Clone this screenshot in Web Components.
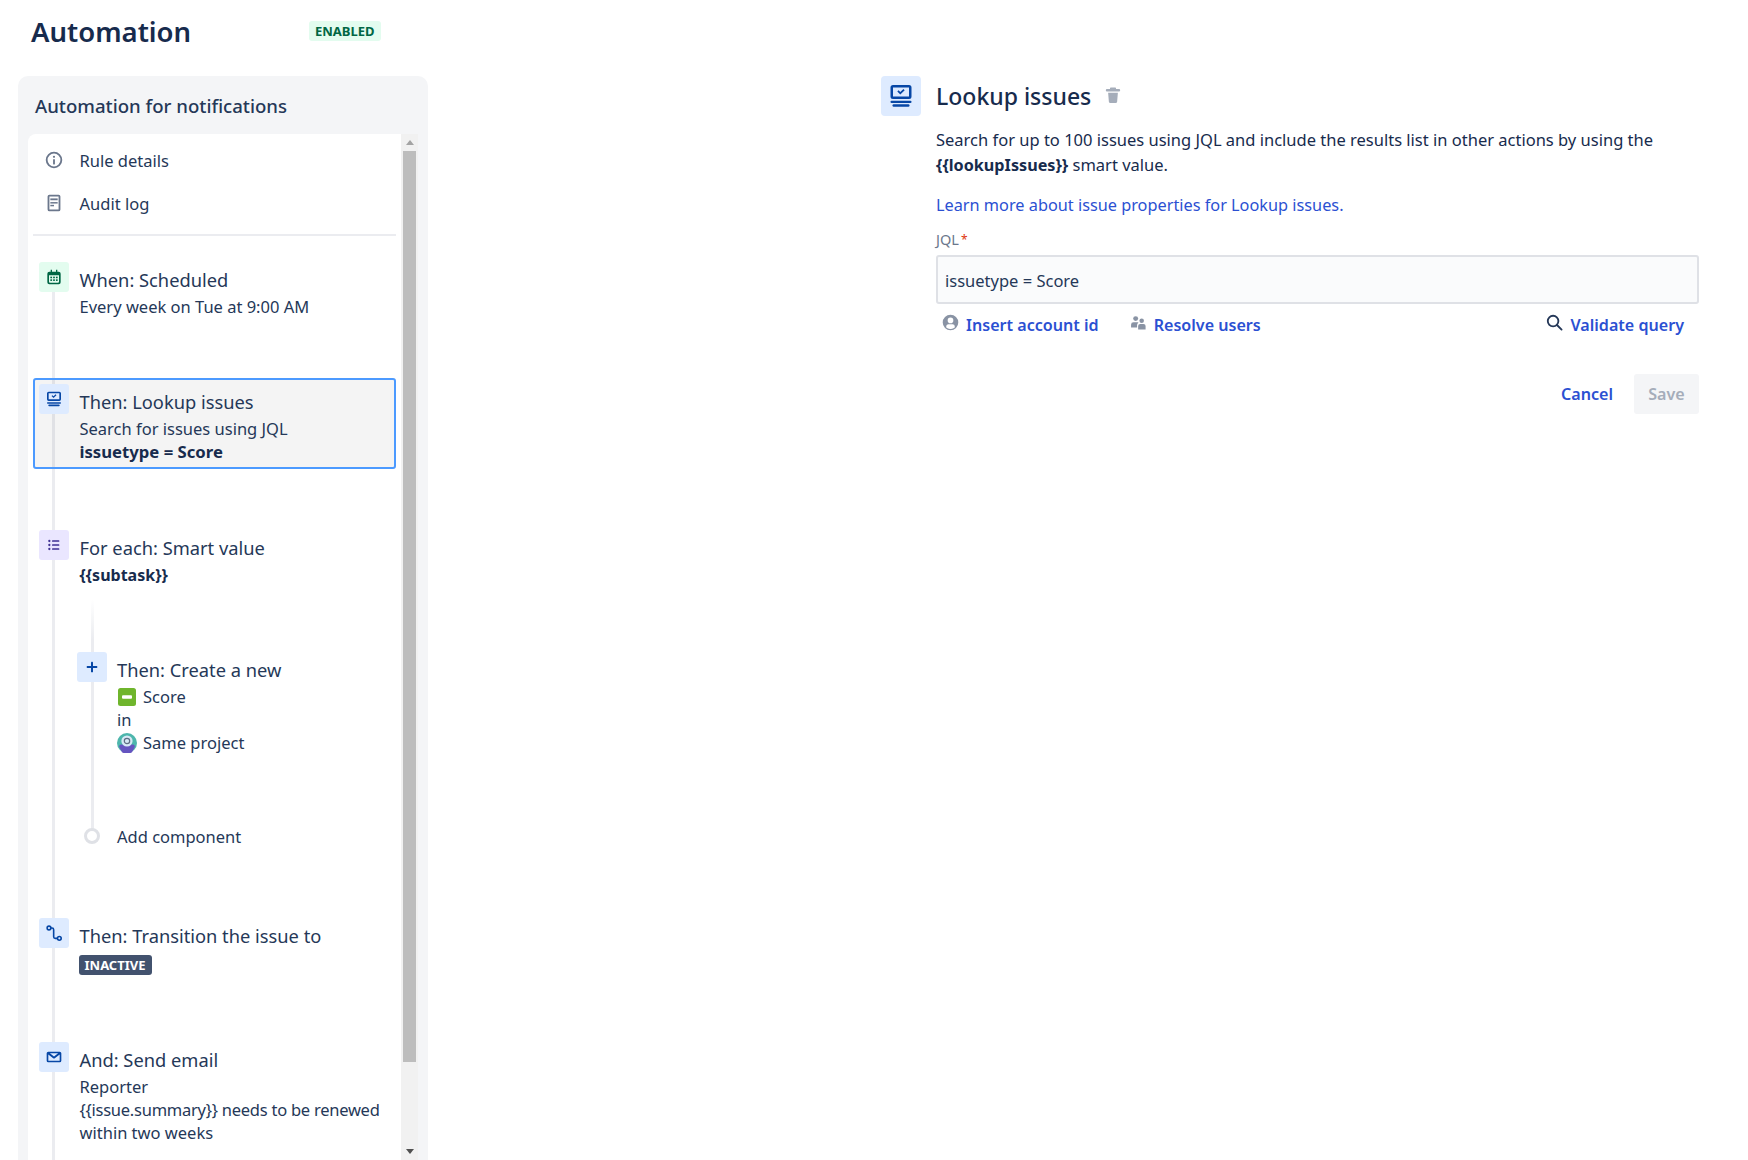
<!DOCTYPE html>
<html><head><meta charset="utf-8">
<style>
html,body{margin:0;padding:0;height:1160px;overflow:hidden;background:#fff}
body{font-family:"Noto Sans","Open Sans",sans-serif;color:#172B4D}
</style></head>
<body>
<template id="icons">
<svg data-i="info" viewBox="0 0 24 24"><path fill-rule="evenodd" d="M12 21a9 9 0 1 0 0-18 9 9 0 0 0 0 18zm0-2a7 7 0 1 1 0-14 7 7 0 0 1 0 14z"/><rect x="11" y="11" width="2" height="6" rx="1"/><circle cx="12" cy="8.5" r="1.2"/></svg>
<svg data-i="doc" viewBox="0 0 24 24"><path fill-rule="evenodd" d="M7 3h10a2 2 0 0 1 2 2v14a2 2 0 0 1-2 2H7a2 2 0 0 1-2-2V5a2 2 0 0 1 2-2zm0 2v14h10V5H7z"/><rect x="8" y="7" width="8" height="2"/><rect x="8" y="11" width="8" height="1.600"/><rect x="8" y="14" width="4" height="1.600"/></svg>
<svg data-i="cal" viewBox="0 0 24 24"><path fill-rule="evenodd" d="M7 1h2v3h6V1h2v3h2a3 3 0 0 1 3 3v13a3 3 0 0 1-3 3H5a3 3 0 0 1-3-3V7a3 3 0 0 1 3-3h2V1zM4.500 9.500V19a1.500 1.500 0 0 0 1.500 1.500h12a1.500 1.500 0 0 0 1.500-1.500V9.500h-15z"/><rect x="6.500" y="11.500" width="2.600" height="2.400"/><rect x="10.700" y="11.500" width="2.600" height="2.400"/><rect x="14.900" y="11.500" width="2.600" height="2.400"/><rect x="6.500" y="15.500" width="2.600" height="2.400"/><rect x="10.700" y="15.500" width="2.600" height="2.400"/><rect x="14.900" y="15.500" width="2.600" height="2.400"/></svg>
<svg data-i="lookup" viewBox="0 0 24 24"><path fill-rule="evenodd" d="M4 1h16a2.500 2.500 0 0 1 2.500 2.500v9a2.500 2.500 0 0 1-2.500 2.500H4a2.500 2.500 0 0 1-2.500-2.500v-9A2.500 2.500 0 0 1 4 1zm0 2.500v9h16v-9H4z"/><path d="M8.300 7.600l1.300-1.300 1.700 1.700 3.100-3.100 1.300 1.300-4.400 4.400z"/><rect x="1.500" y="16.700" width="21" height="2.300" rx="1"/><rect x="3.500" y="20.300" width="17" height="2.500" rx="1.200"/></svg>
<svg data-i="list" viewBox="0 0 24 24"><circle cx="5" cy="6" r="1.700"/><circle cx="5" cy="12" r="1.700"/><circle cx="5" cy="18" r="1.700"/><rect x="9" y="4.700" width="11" height="2.600" rx="1"/><rect x="9" y="10.700" width="11" height="2.600" rx="1"/><rect x="9" y="16.700" width="11" height="2.600" rx="1"/></svg>
<svg data-i="plus" viewBox="0 0 24 24"><rect x="10.500" y="4" width="3" height="16" rx="1"/><rect x="4" y="10.500" width="16" height="3" rx="1"/></svg>
<svg data-i="flow" viewBox="0 0 24 24" fill="none" stroke="currentColor" stroke-width="2.400"><circle cx="4.500" cy="4.500" r="2.800"/><circle cx="20" cy="20" r="2.800"/><path d="M7.300 4.500H9a2.500 2.500 0 0 1 2.500 2.500v10.500a2.500 2.500 0 0 0 2.500 2.500h3.200"/></svg>
<svg data-i="mail" viewBox="0 0 24 24"><path fill-rule="evenodd" d="M3.500 4h17A2.500 2.500 0 0 1 23 6.500v11a2.500 2.500 0 0 1-2.500 2.500h-17A2.500 2.500 0 0 1 1 17.500v-11A2.500 2.500 0 0 1 3.500 4zM3.500 8.300v9.200h17V8.300l-7.300 5.600a2 2 0 0 1-2.400 0L3.500 8.300zM5.800 6.500l6.200 4.800 6.200-4.800H5.800z"/></svg>
<svg data-i="trash" viewBox="0 0 24 24"><path d="M9 2h6a1 1 0 0 1 1 1v1h4a1.600 1.600 0 0 1 0 3.200H4A1.600 1.600 0 0 1 4 4h4V3a1 1 0 0 1 1-1z"/><path d="M5.500 9h13l-1 12a1.500 1.500 0 0 1-1.500 1.500H8A1.500 1.500 0 0 1 6.500 21z"/></svg>
<svg data-i="user" viewBox="0 0 24 24"><path fill-rule="evenodd" d="M12 1a11 11 0 1 1 0 22 11 11 0 0 1 0-22zm0 4a4 4 0 1 0 0 8 4 4 0 0 0 0-8zm-6 14.200A8.500 8.500 0 0 0 12 21a8.500 8.500 0 0 0 6-1.800V17a3 3 0 0 0-3-2.500H9A3 3 0 0 0 6 17z"/></svg>
<svg data-i="people" viewBox="0 0 24 24"><circle cx="8" cy="6.500" r="3.500"/><circle cx="16.500" cy="9.500" r="3.200"/><path d="M1.500 19v-4a3.500 3.500 0 0 1 3.500-3.500h6A3.500 3.500 0 0 1 12 12.200 4 4 0 0 0 10 16v3z"/><path d="M11.500 22v-5a3 3 0 0 1 3-3h4.500a3 3 0 0 1 3 3v5z"/></svg>
<svg data-i="search" viewBox="0 0 24 24" fill="none" stroke="currentColor" stroke-width="2.600"><circle cx="10" cy="10" r="7.500"/><path d="M15.500 15.500L22 22" stroke-linecap="round"/></svg>
<svg data-i="score" viewBox="0 0 18 18"><rect width="18" height="18" rx="2.500" fill="#6FB52C"/><rect x="4" y="7.200" width="10" height="3.600" rx="1" fill="#fff"/></svg>
<svg data-i="robot" viewBox="0 0 20 20"><circle cx="10" cy="10" r="10" fill="#4DB6AC"/><path d="M2.500 14.500a2 2 0 0 1 2-3h11a2 2 0 0 1 2 3L15 19.200a10 10 0 0 1-10 0z" fill="#6554C0"/><circle cx="10" cy="8" r="5.600" fill="#D7E9F5"/><circle cx="10" cy="8" r="2.700" fill="none" stroke="#5E6C84" stroke-width="1.200"/></svg>
</template>

<template id="t-icon">
<style>:host{display:inline-flex;align-items:center;justify-content:center;flex:none}
svg{display:block;width:100%;height:100%;fill:currentColor}svg[fill=none]{fill:none}</style>
<span id="h" style="display:contents"></span>
</template>

<template id="t-lozenge">
<style>:host{display:inline-block;font:700 13px/20px "Noto Sans",sans-serif;height:20px;padding:0 6px;border-radius:3px;box-sizing:border-box;vertical-align:top}
:host([tone=green]){background:#E3FCEF;color:#006644}
:host([tone=dark]){background:#42526E;color:#fff}</style><slot></slot>
</template>

<template id="t-step">
<style>
:host{display:block;position:relative;box-sizing:border-box;font-size:16.500px;line-height:23px;color:#253858}
.wrap{display:flex;gap:10.500px;padding:6px 0 0 6px}
:host([selected]){border:2px solid #4C9AFF;border-radius:3px;background:rgba(0,0,0,.045)}
:host([selected]) .wrap{padding:4px 0 0 4px}
:host([nested]) .wrap{gap:10px}
.badge{width:30px;height:30px;border-radius:3px;flex:none;display:flex;align-items:center;justify-content:center;position:relative;z-index:1}
.badge a-icon{width:16px;height:16px}
.t{font-size:18.300px;line-height:24px;margin-top:5.500px;color:#253858}
.body{display:block;margin-top:3.500px}
:host([tone=green]) .badge{background:#E3FCEF;color:#006644}
:host([tone=blue]) .badge{background:#DEEBFF;color:#0747A6}
:host([tone=purple]) .badge{background:#EAE6FF;color:#403294}
</style>
<div class="wrap"><div class="badge"><a-icon id="ic"></a-icon></div>
<div><div class="t" id="t"></div><div class="body"><slot></slot></div></div></div>
</template>

<template id="t-panel">
<style>
:host{display:flex;flex-direction:column;width:410px;height:1084px;background:#F4F5F7;border-radius:10px 10px 0 0;box-sizing:border-box;padding:0 10px;margin-left:18px;flex:none;overflow:hidden;color:#253858}
h2{margin:0;font:500 18.600px/26px "Noto Sans",sans-serif;padding:17px 0 15px 7px;color:#253858}
.row{display:flex;flex:1;min-height:0}
.scroll{flex:1;background:#fff;border-radius:8px 0 0 0;overflow:hidden;position:relative;padding:0 5px}
.bar{width:17px;flex:none;background:#F1F1F1;display:flex;flex-direction:column;align-items:center}
.up,.down{height:17px;flex:none;display:flex;align-items:center;justify-content:center}
.up i{border:4px solid transparent;border-top:0;border-bottom:5px solid #A3A3A3;display:block}
.down i{border:4px solid transparent;border-bottom:0;border-top:5px solid #505050;display:block}
.thumb{width:13px;height:911px;background:#BDBDBD;flex:none}
.sp{flex:1}
</style>
<h2 id="h"></h2>
<div class="row"><div class="scroll"><slot></slot></div>
<div class="bar"><div class="up"><i></i></div><div class="thumb"></div><div class="sp"></div><div class="down"><i></i></div></div></div>
</template>

<template id="t-link">
<style>:host{display:flex;align-items:center;height:43px;gap:14.500px;padding-left:10px;font-size:16.500px;color:#253858}
a-icon{width:22px;height:22px;color:#6B778C;margin-top:-1px}</style>
<a-icon id="ic"></a-icon><span><slot></slot></span>
</template>

<template id="t-action">
<style>:host{display:inline-flex;align-items:center;gap:7px;color:#2B50D2;font:600 16.100px/22px "Noto Sans",sans-serif}
a-icon{width:17px;height:17px;margin-top:-5px;color:#8993A4}:host([dark]) a-icon{color:#253858}</style>
<a-icon id="ic"></a-icon><span><slot></slot></span>
</template>

<template id="t-editor">
<style>
:host{display:block;flex:none;width:818px;margin-left:453px;color:#172B4D;font-size:16.500px;line-height:25px}
.head{display:flex;align-items:center;height:40px;gap:15px}
.big{width:40px;height:40px;background:#DEEBFF;border-radius:4px;color:#0747A6;display:flex;align-items:center;justify-content:center}
.big a-icon{width:24px;height:24px}
h1{font:500 23px/34px "Noto Sans",sans-serif;margin:0;color:#172B4D}
.trash{width:18px;height:18px;color:#A5ADBA;margin-top:-2px;margin-left:-2px}
.main{margin-left:55px}
p{margin:0}
.desc{margin-top:11px}
b{font-weight:700;font-size:16.200px}
.lnk{margin-top:15px;color:#2B50D2;font-size:16.300px}
label{display:block;margin-top:11px;font-size:14.500px;line-height:20px;color:#6B778C}
label span{color:#DE350B;margin-left:2px;font-size:12px;vertical-align:1px}
.input{box-sizing:border-box;height:49px;border:2px solid #DFE1E6;border-radius:3px;background:#FAFBFC;margin-top:5px;padding:1px 7px 0;display:flex;align-items:center;color:#253858}
.actions{display:flex;align-items:center;margin-top:9px;padding:0 15px 0 6px;height:24px}
.actions a-action+a-action{margin-left:31px}
.sp{flex:1}
.btns{display:flex;justify-content:flex-end;align-items:center;margin-top:37px;gap:21px}
.cancel{color:#2B50D2;font-weight:600;font-size:16.100px}
.save{width:65px;height:40px;background:#F4F5F7;border-radius:3px;color:#A5ADBA;font-weight:600;font-size:16.100px;display:flex;align-items:center;justify-content:center}
</style>
<div class="head"><div class="big"><a-icon name="lookup"></a-icon></div><h1>Lookup issues</h1><a-icon class="trash" name="trash"></a-icon></div>
<div class="main">
<p class="desc">Search for up to 100 issues using JQL and include the results list in other actions by using the<br><b>{{lookupIssues}}</b> smart value.</p>
<p class="lnk">Learn more about issue properties for Lookup issues.</p>
<label>JQL<span>*</span></label>
<div class="input">issuetype = Score</div>
<div class="actions"><a-action icon="user">Insert account id</a-action><a-action icon="people">Resolve users</a-action><div class="sp"></div><a-action icon="search" dark>Validate query</a-action></div>
<div class="btns"><span class="cancel">Cancel</span><span class="save">Save</span></div>
</div>
</template>

<template id="t-app">
<style>
:host{display:block;height:1160px;overflow:hidden}
header{height:76px;display:flex;align-items:flex-start;padding-left:31px;box-sizing:border-box}
h1{margin:12px 0 0;font:600 27.500px/40px "Noto Sans",sans-serif;color:#172B4D;width:278px}
a-lozenge{margin-top:21px}
main{display:flex}
</style>
<header><h1>Automation</h1><a-lozenge tone="green">ENABLED</a-lozenge></header>
<main><slot></slot></main>
</template>

<template id="t-list">
<style>
:host{display:block;position:relative;padding-top:5px;font-size:16.500px;height:1040px;overflow:hidden;color:#253858}
.rail{position:absolute;left:19px;top:158px;width:3px;height:900px;background:#EBECF0}
.sep{height:2px;background:#EBECF0;margin:9px 0 0}
.s1{margin-top:20px;height:122px}
.s2{height:91px}
.s2 b{font-size:16.700px}
.s3{margin-top:55px;height:122px}
.s3 b{font-size:16px}
.nest{position:relative;margin-left:38px;height:266px}
.line{position:absolute;left:20px;top:-46px;width:3px;height:230px;background:linear-gradient(#fff,#EBECF0 40px,#EBECF0)}
.s4{height:181px}
.add{position:relative;display:flex;align-items:center;height:20px;padding-left:46px}
.add span+span{margin-top:-2px}
.dot{position:absolute;left:13px;top:1px;width:10px;height:10px;border:3px solid #DFE1E6;border-radius:50%;background:#fff}
.rows{display:flex;flex-direction:column}
.it{display:flex;align-items:center;gap:7px;height:23px}
.it a-icon{width:18px;height:18px;margin-left:1px}
.it a-icon.r{width:20px;height:20px;margin-left:0;margin-right:-1px}
.in{height:23px}
.tight{letter-spacing:-.25px}
b{font-weight:700;color:#172B4D}
.s5{height:124px}
.s5 a-lozenge{margin:4px 0 0 -1px}
</style>
<div class="rail"></div>
<a-linkrow icon="info">Rule details</a-linkrow>
<a-linkrow icon="doc">Audit log</a-linkrow>
<div class="sep"></div>
<a-step class="s1" tone="green" icon="cal" title-text="When: Scheduled">Every week on Tue at 9:00 AM</a-step>
<a-step class="s2" selected tone="blue" icon="lookup" title-text="Then: Lookup issues">Search for issues using JQL<br><b>issuetype = Score</b></a-step>
<a-step class="s3" tone="purple" icon="list" title-text="For each: Smart value"><b>{{subtask}}</b></a-step>
<div class="nest"><div class="line"></div>
<a-step class="s4" nested tone="blue" icon="plus" title-text="Then: Create a new"><div class="rows"><span class="it"><a-icon name="score"></a-icon>Score</span><span class="in">in</span><span class="it"><a-icon class="r" name="robot"></a-icon>Same project</span></div></a-step>
<div class="add"><span class="dot"></span><span>Add component</span></div>
</div>
<a-step class="s5" tone="blue" icon="flow" title-text="Then: Transition the issue to"><a-lozenge tone="dark">INACTIVE</a-lozenge></a-step>
<a-step class="s6" tone="blue" icon="mail" title-text="And: Send email">Reporter<br><span class="tight">{{issue.summary}} needs to be renewed</span><br>within two weeks</a-step>
</template>

<script>
const iconSrc=document.getElementById('icons').content;
function mk(name,tpl,init){customElements.define(name,class extends HTMLElement{
  constructor(){super();this.attachShadow({mode:'open'}).appendChild(document.getElementById(tpl).content.cloneNode(true));}
  connectedCallback(){init&&init.call(this,this.shadowRoot);}
});}
const put=(ic,n)=>{const s=iconSrc.querySelector('[data-i="'+n+'"]');
  if(s&&!ic.shadowRoot.querySelector('svg'))ic.shadowRoot.getElementById('h').appendChild(s.cloneNode(true));};
mk('a-icon','t-icon',function(){const n=this.getAttribute('name');if(n)put(this,n);});
mk('a-lozenge','t-lozenge');
const setIcon=function(r){const ic=r.getElementById('ic');put(ic,this.getAttribute('icon'));
  const t=r.getElementById('t');if(t)t.textContent=this.getAttribute('title-text');};
mk('a-step','t-step',setIcon);
mk('a-linkrow','t-link',setIcon);
mk('a-action','t-action',setIcon);
mk('a-panel','t-panel',function(r){r.getElementById('h').textContent=this.getAttribute('heading');});
mk('a-list','t-list');
mk('a-editor','t-editor');
mk('a-app','t-app');
</script>
<a-app><a-panel heading="Automation for notifications"><a-list></a-list></a-panel><a-editor></a-editor></a-app>
</body></html>
